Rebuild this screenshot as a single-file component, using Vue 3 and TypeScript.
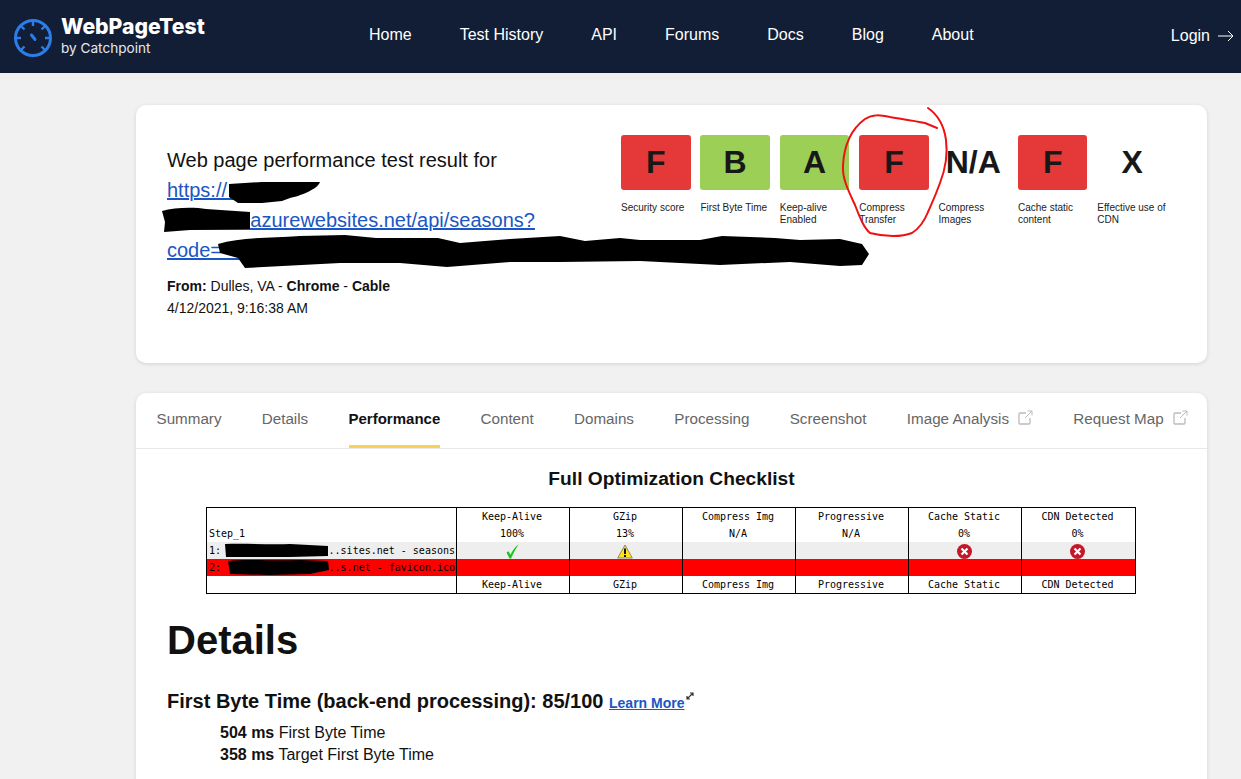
<script setup lang="ts">
const nav: string[] = ['Home', 'Test History', 'API', 'Forums', 'Docs', 'Blog', 'About']

interface Grade { letter: string; label: string; tone: string }
const grades: Grade[] = [
  { letter: 'F', label: 'Security score', tone: 'bad' },
  { letter: 'B', label: 'First Byte Time', tone: 'good' },
  { letter: 'A', label: 'Keep-alive Enabled', tone: 'good' },
  { letter: 'F', label: 'Compress Transfer', tone: 'bad' },
  { letter: 'N/A', label: 'Compress Images', tone: 'none' },
  { letter: 'F', label: 'Cache static content', tone: 'bad' },
  { letter: 'X', label: 'Effective use of CDN', tone: 'none' }
]

interface Tab { name: string; active?: boolean; external?: boolean }
const tabs: Tab[] = [
  { name: 'Summary' },
  { name: 'Details' },
  { name: 'Performance', active: true },
  { name: 'Content' },
  { name: 'Domains' },
  { name: 'Processing' },
  { name: 'Screenshot' },
  { name: 'Image Analysis', external: true },
  { name: 'Request Map', external: true }
]

const columns: string[] = ['Keep-Alive', 'GZip', 'Compress Img', 'Progressive', 'Cache Static', 'CDN Detected']
const scores: string[] = ['100%', '13%', 'N/A', 'N/A', '0%', '0%']
const marks: string[] = ['check', 'warn', '', '', 'error', 'error']

const blanks = (n: number): string => '\u00a0'.repeat(n)
</script>

<template>
  <div class="page">
    <header class="topbar">
      <div class="brand">
        <svg class="gauge" width="40" height="40" viewBox="0 0 40 40" fill="none" stroke="#2b7de9" stroke-width="3">
          <circle cx="20" cy="20" r="17.5" />
          <path stroke-width="2.4" d="M20 3v5M3 20h5M37 20h-5M8 8l3.500 3.500M32 8l-3.500 3.500M8 32l3.500-3.500M32 32l-3.500-3.500" />
          <path stroke-width="3" stroke-linecap="round" d="M18.500 17l3.500 4.500" />
        </svg>
        <div class="brand-text">
          <div class="brand-name">WebPageTest</div>
          <div class="brand-sub">by Catchpoint</div>
        </div>
      </div>
      <nav class="nav">
        <a v-for="item in nav" :key="item">{{ item }}</a>
      </nav>
      <a class="login">
        Login
        <svg width="16" height="12" viewBox="0 0 16 12" fill="none" stroke="#fff" stroke-width="1">
          <path d="M0 6h15M10 1l5 5-5 5" />
        </svg>
      </a>
    </header>

    <main class="main">
      <section class="card summary">
        <div class="result">
          <h1 class="result-title">Web page performance test result for</h1>
          <div class="result-url">
            <a>https://{{ blanks(10) }}</a><br />
            <a>{{ blanks(15) }}azurewebsites.net/api/seasons?</a><br />
            <a>code={{ blanks(113) }}</a>
          </div>
          <p class="meta"><b>From:</b> Dulles, VA - <b>Chrome</b> - <b>Cable</b></p>
          <p class="meta">4/12/2021, 9:16:38 AM</p>
        </div>
        <div class="grades">
          <div v-for="(g, i) in grades" :key="i" class="grade">
            <div class="grade-box" :class="g.tone">{{ g.letter }}</div>
            <div class="grade-label">{{ g.label }}</div>
          </div>
        </div>
      </section>

      <section class="card report">
        <div class="tabs">
          <a v-for="t in tabs" :key="t.name" class="tab" :class="{ active: t.active }">
            {{ t.name }}
            <svg v-if="t.external" width="15" height="15" viewBox="0 0 15 15" fill="none" stroke="#bbb" stroke-width="1.300">
              <path d="M8 3H2a1 1 0 0 0-1 1v9a1 1 0 0 0 1 1h9a1 1 0 0 0 1-1V8" />
              <path stroke-width="1" d="M7 8l7-7M9.500 1H14v4.500" />
            </svg>
          </a>
        </div>

        <div class="report-body">
          <h2 class="check-title">Full Optimization Checklist</h2>
          <table class="checklist">
            <colgroup>
              <col class="col-first" />
              <col v-for="c in 5" :key="c" class="col-mid" />
              <col class="col-last" />
            </colgroup>
            <tbody>
              <tr>
                <td></td>
                <td v-for="c in columns" :key="c">{{ c }}</td>
              </tr>
              <tr>
                <td class="name">Step_1</td>
                <td v-for="(s, i) in scores" :key="i">{{ s }}</td>
              </tr>
              <tr class="grey">
                <td class="name split"><span>1:</span><span>..sites.net - seasons</span></td>
                <td v-for="(m, i) in marks" :key="i" class="mark">
                  <svg v-if="m === 'check'" width="15" height="15" viewBox="0 0 15 15">
                    <path d="M1.500 8.500l2-1.300 2 3.500C7.500 6.500 10 3 13.500 0.500 11 4 8.500 9 6 14.500H4.500z" fill="#18c71c" />
                  </svg>
                  <svg v-else-if="m === 'warn'" width="16" height="15" viewBox="0 0 16 15">
                    <path d="M8 1L15.300 14H0.700z" fill="#ffe21a" stroke="#8d8a6a" stroke-width="1" stroke-linejoin="round" />
                    <rect x="7" y="4.500" width="2" height="5.500" fill="#111" />
                    <rect x="7" y="11" width="2" height="2" fill="#111" />
                  </svg>
                  <svg v-else-if="m === 'error'" width="15" height="15" viewBox="0 0 15 15">
                    <circle cx="7.500" cy="7.500" r="7.500" fill="#c4182a" />
                    <path d="M4.500 4.500l6 6M10.500 4.500l-6 6" stroke="#fff" stroke-width="2.200" />
                  </svg>
                </td>
              </tr>
              <tr class="red">
                <td class="name split"><span>2:</span><span>..s.net - favicon.ico</span></td>
                <td v-for="c in columns" :key="c"></td>
              </tr>
              <tr>
                <td></td>
                <td v-for="c in columns" :key="c">{{ c }}</td>
              </tr>
            </tbody>
          </table>

          <h1 class="details-title">Details</h1>
          <h3 class="fbt">
            First Byte Time (back-end processing): 85/100
            <a class="learn">Learn More</a><svg class="learn-icon" width="8" height="8" viewBox="0 0 8 8" fill="none" stroke="#333" stroke-width="1.200"><path d="M1 7l6-6M4 1h3v3M1 4v3h3" /></svg>
          </h3>
          <div class="fbt-lines">
            <div><b>504 ms</b> First Byte Time</div>
            <div><b>358 ms</b> Target First Byte Time</div>
          </div>
        </div>
      </section>
    </main>

    <svg class="annotations" width="1241" height="779" viewBox="0 0 1241 779" fill="none">
      <g fill="#000">
        <path d="M229 184L262 182 320 182C318 189 300 196 290 198L282 201 262 203 238 203 229 197z" />
        <path d="M162 211C175 207 195 207 206 209L250 212 250 229 190 230 164 232 165 222z" />
        <path d="M218 244C240 237 270 238 300 236L345 235 376 238 438 238 460 243 510 239 560 236 585 241 620 238 640 240 700 240 722 236 775 238 800 240 840 239 862 244 869 254 862 265 840 266 790 262 720 265 640 261 560 262 510 262 447 267 400 263 340 263 245 268 238 258 220 253z" />
        <path d="M225 544C245 543 270 545 290 544L328 546 328 556 290 557 250 557 226 557z" />
        <path d="M228 561C245 559 270 561 300 560L328 561 329 570 310 574 270 575 230 574z" />
      </g>
      <path stroke="#ee1111" stroke-width="2" stroke-linecap="round" stroke-linejoin="round"
        d="M928 108C938 115 944 125 946 140 948 155 945 170 940 183 935 197 931 205 928 212 924 222 920 228 912 233 902 237 885 237 870 233 864 228 860 218 855 205 848 190 842 178 843 165 844 148 850 130 865 119 873 114 880 115 890 117 902 119 915 121 925 123L937 128" />
    </svg>
  </div>
</template>

<style scoped>
.page {
  position: relative;
  height: 779px;
  overflow: hidden;
  background: #f1f1f1;
  font-family: "Liberation Sans", Arial, sans-serif;
  color: #111;
}
.topbar {
  display: flex;
  align-items: center;
  height: 73px;
  background: #121e36;
  color: #fff;
  box-sizing: border-box;
  padding: 0 7px 3px 13px;
}
.brand {
  display: flex;
  align-items: center;
  gap: 8px;
  width: 356px;
  flex: none;
}
.gauge {
  margin-top: 5px;
}
.brand-name {
  font-family: Inter, sans-serif;
  font-weight: 800;
  font-size: 21.200px;
  line-height: 26px;
}
.brand-sub {
  font-family: Inter, sans-serif;
  font-size: 13.600px;
  line-height: 18px;
  color: #e8e8ee;
}
.nav {
  display: flex;
  gap: 48px;
  font-size: 16px;
}
.login {
  margin-left: auto;
  display: flex;
  align-items: center;
  gap: 8px;
  font-size: 16px;
  padding-top: 1px;
}
.main {
  display: flex;
  flex-direction: column;
  gap: 30px;
  padding: 32px 34px 0 136px;
}
.card {
  background: #fff;
  border-radius: 10px;
  box-shadow: 0 1px 4px rgba(0, 0, 0, 0.12);
}
.summary {
  display: flex;
  height: 258px;
  box-sizing: border-box;
  padding: 30px 0 0 31px;
}
.result {
  width: 454px;
  flex: none;
  padding-top: 10px;
}
.result-title {
  margin: 0;
  font-size: 20px;
  font-weight: 400;
  line-height: 30px;
}
.result-url {
  font-size: 20px;
  line-height: 30px;
  white-space: nowrap;
}
.result-url a {
  color: #1a56c4;
  text-decoration: underline;
}
.meta {
  margin: 0;
  font-size: 14px;
  line-height: 22px;
}
.result-url + .meta {
  margin-top: 10px;
}
.grades {
  display: flex;
  gap: 9.900px;
}
.grade {
  width: 69.500px;
}
.grade-box {
  height: 55px;
  border-radius: 3px;
  display: flex;
  align-items: center;
  justify-content: center;
  font-size: 32px;
  font-weight: 700;
  color: #181818;
}
.bad {
  background: #e53838;
}
.good {
  background: #9ccf56;
}
.grade-label {
  margin-top: 12px;
  font-size: 10px;
  line-height: 12px;
  color: #222;
}
.report {
  height: 500px;
}
.tabs {
  display: flex;
  gap: 40.300px;
  height: 56px;
  box-sizing: border-box;
  padding-left: 20.500px;
  border-bottom: 1px solid #e8e8e8;
}
.tab {
  display: flex;
  gap: 9px;
  align-items: flex-start;
  height: 55px;
  box-sizing: border-box;
  padding-top: 17px;
  font-size: 15.200px;
  line-height: 18px;
  color: #666;
}
.tab.active {
  color: #111;
  font-size: 15px;
  font-weight: 700;
  border-bottom: 3px solid #f7d354;
}
.report-body {
  padding: 18px 31px 0;
}
.check-title {
  margin: 0;
  text-align: center;
  font-size: 19.200px;
  line-height: 23px;
  font-weight: 700;
}
.checklist {
  margin: 17px 0 0 39px;
  width: 930px;
  table-layout: fixed;
  border-collapse: separate;
  border-spacing: 0;
  border: 1px solid #000;
  box-sizing: border-box;
  font-family: "DejaVu Sans Mono", monospace;
  font-size: 10px;
  color: #000;
}
.col-first {
  width: 249px;
}
.col-mid {
  width: 113px;
}
.col-last {
  width: 114px;
}
.checklist td {
  height: 17px;
  padding: 0 2px 0 0;
  text-align: center;
  border-left: 1px solid #000;
  line-height: 17px;
  box-sizing: border-box;
}
.checklist td:first-child {
  border-left: 0;
}
.checklist td.name {
  text-align: left;
  padding: 0 1px 0 2px;
  white-space: nowrap;
}
.checklist td.split span:last-child {
  float: right;
}
.checklist td.split span:first-child {
  float: left;
}
.grey td {
  background: #eee;
}
.red td {
  background: #f00;
}
.mark svg {
  display: block;
  margin: 1px auto 0;
}
.details-title {
  margin: 22px 0 0;
  font-size: 40px;
  line-height: 48px;
  font-weight: 700;
}
.fbt {
  margin: 25px 0 0;
  font-size: 20px;
  line-height: 24px;
  font-weight: 700;
}
.learn {
  color: #1a56c4;
  font-size: 14px;
  text-decoration: underline;
}
.learn-icon {
  vertical-align: 8px;
  margin-left: 2px;
}
.fbt-lines {
  margin: 7px 0 0 53px;
  font-size: 16px;
  line-height: 22px;
}
.annotations {
  position: absolute;
  left: 0;
  top: 0;
  pointer-events: none;
}
</style>
